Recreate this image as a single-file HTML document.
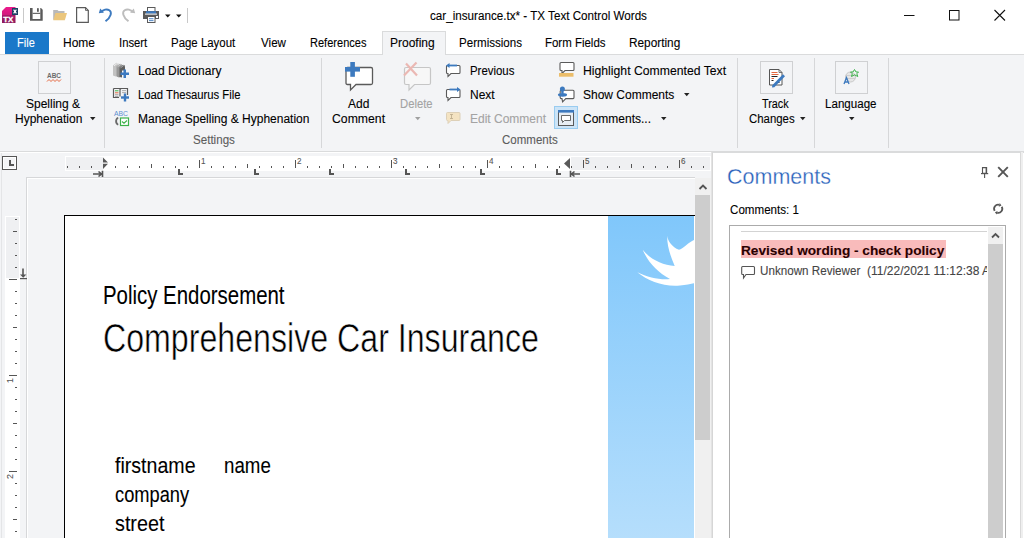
<!DOCTYPE html>
<html><head><meta charset="utf-8">
<style>
*{box-sizing:border-box;margin:0;padding:0}
html,body{width:1024px;height:538px;overflow:hidden;background:#fff;font-family:"Liberation Sans",sans-serif;font-size:12px;color:#000;position:relative}
.a{position:absolute}
.t{position:absolute;white-space:pre;line-height:1;transform-origin:0 0;-webkit-text-stroke:0.1px currentColor}
.sep{position:absolute;background:#d6d7d9;width:1px}
svg{position:absolute;overflow:visible}
.dt{color:#000}
.dtb{-webkit-text-stroke:0.55px #fff}
</style></head><body>

<!-- ===== Title bar ===== -->
<div id="titlebar" class="a" style="left:0;top:0;width:1024px;height:31px;background:#fff"></div>
<div class="t" style="left:430px;top:10px;font-size:12px;color:#000;transform:scaleX(0.971)">car_insurance.tx* - TX Text Control Words</div>


<!-- app icon -->
<svg style="left:0;top:0" width="200" height="31" viewBox="0 0 200 31">
 <defs><linearGradient id="mg" x1="0" y1="0" x2="0" y2="1"><stop offset="0" stop-color="#ec1a8c"/><stop offset="0.5" stop-color="#d1187d"/><stop offset="0.52" stop-color="#a8196a"/><stop offset="1" stop-color="#8e1b5c"/></linearGradient></defs>
 <path d="M6 7 H15.5 V23 H2 V11 Z" fill="url(#mg)"/>
 <rect x="12" y="8" width="6" height="7" fill="#1d3f63"/>
 <path d="M13.6 9.6 L16.4 13.4 M16.4 9.6 L13.6 13.4" stroke="#fff" stroke-width="1.1"/>
 <rect x="14.2" y="10.6" width="1.6" height="1.8" fill="#fff"/>
 <text x="3.2" y="21.8" font-family="Liberation Sans" font-weight="bold" font-size="8" fill="#fff" stroke="#fff" stroke-width="0.3" textLength="10" lengthAdjust="spacingAndGlyphs">TX</text>
 <rect x="23" y="8" width="1" height="15" fill="#c9c9c9"/>
 <!-- save -->
 <path d="M30 8 H32.6 V19 H40.3 V8 H41 L42.7 9.8 V20.7 H30 Z" fill="#5a5a5a"/>
 <rect x="32.6" y="12.8" width="7.7" height="1.1" fill="#5a5a5a"/>
 <rect x="37" y="8.2" width="1.8" height="3.6" fill="#5a5a5a"/>
 <!-- open -->
 <path d="M53.2 10 H57.5 L58.5 11 H64.5 V19.8 H53.2 Z" fill="#b9b9b9"/>
 <path d="M55.5 13 H67 L64.8 20.3 H53.3 Z" fill="#ebc67c"/>
 <!-- new -->
 <path d="M76.6 7.6 H85.5 L88.3 10.4 V22.3 H76.6 Z" fill="#fff" stroke="#5a5a5a" stroke-width="1.2"/>
 <path d="M85.5 7.6 V10.4 H88.3" fill="none" stroke="#5a5a5a" stroke-width="0.9"/>
 <!-- undo -->
 <path d="M101.5 12.3 C103 9.5 107 8.8 109.3 10.3 C112 12 111.5 16.5 105.5 21.3" fill="none" stroke="#3d7abf" stroke-width="1.9"/>
 <path d="M98.8 13.3 L100.2 8.6 L104 12.6 Z" fill="#3d7abf"/>
 <!-- redo -->
 <path d="M132.5 12.3 C131 9.5 127 8.8 124.7 10.3 C122 12 122.5 16.5 128.5 21.3" fill="none" stroke="#bdbdbd" stroke-width="1.9"/>
 <path d="M135.2 13.3 L133.8 8.6 L130 12.6 Z" fill="#bdbdbd"/>
 <!-- print -->
 <rect x="147.5" y="7.5" width="7.5" height="4.5" fill="#fff" stroke="#5a5a5a" stroke-width="1"/>
 <rect x="143" y="11" width="16" height="8" fill="#5a5a5a"/>
 <rect x="146" y="11.2" width="10" height="2.4" fill="#3d7abf"/>
 <rect x="145" y="13.6" width="12" height="1" fill="#fff"/>
 <rect x="156" y="16" width="2" height="2" fill="#fff"/>
 <rect x="147.5" y="16.5" width="7.5" height="6" fill="#fff" stroke="#5a5a5a" stroke-width="1"/>
 <rect x="149" y="18.3" width="4.5" height="0.9" fill="#3d7abf"/>
 <rect x="149" y="20.2" width="4.5" height="0.9" fill="#3d7abf"/>
 <!-- dropdowns -->
 <path d="M165 14.5 H170.5 L167.75 17.5 Z M176 14.5 H181.5 L178.75 17.5 Z" fill="#111"/>
 <rect x="187" y="8" width="1" height="15" fill="#c9c9c9"/>
</svg>
<!-- window controls -->
<svg style="left:890px;top:0" width="134" height="31" viewBox="890 0 134 31">
 <rect x="904" y="15" width="10.5" height="1" fill="#111"/>
 <rect x="949.5" y="10.5" width="9.5" height="9.5" fill="none" stroke="#111" stroke-width="1"/>
 <path d="M994.5 10 L1005 20.5 M1005 10 L994.5 20.5" stroke="#111" stroke-width="1.1"/>
</svg>

<!-- ===== Tabs ===== -->
<div class="a" style="left:5px;top:32px;width:44px;height:22px;background:#1a78c9"></div>
<div class="t" style="left:17px;top:37px;color:#fff;transform:scaleX(0.92)">File</div>
<div class="t" style="left:63px;top:37px">Home</div>
<div class="t" style="left:119px;top:37px;transform:scaleX(0.94)">Insert</div>
<div class="t" style="left:171px;top:37px;transform:scaleX(0.953)">Page Layout</div>
<div class="t" style="left:261px;top:37px;transform:scaleX(0.97)">View</div>
<div class="t" style="left:310px;top:37px;transform:scaleX(0.92)">References</div>
<div class="a" style="left:382px;top:31px;width:64px;height:24px;background:#f3f4f6;border:1px solid #dadbdc;border-bottom:none"></div>
<div class="t" style="left:390px;top:37px">Proofing</div>
<div class="t" style="left:459px;top:37px;transform:scaleX(0.964)">Permissions</div>
<div class="t" style="left:545px;top:37px;transform:scaleX(0.955)">Form Fields</div>
<div class="t" style="left:629px;top:37px;transform:scaleX(0.985)">Reporting</div>

<!-- ===== Ribbon ===== -->
<div class="a" style="left:0;top:54px;width:382px;height:1px;background:#dadbdc"></div>
<div class="a" style="left:446px;top:54px;width:578px;height:1px;background:#dadbdc"></div>
<div class="a" style="left:0;top:55px;width:1024px;height:96px;background:#f3f4f6"></div>
<div class="a" style="left:0;top:151px;width:1024px;height:1px;background:#dadbdc"></div>


<!-- separators -->
<div class="sep" style="left:104px;top:58px;height:90px"></div>
<div class="sep" style="left:321px;top:58px;height:90px"></div>
<div class="sep" style="left:737px;top:58px;height:90px"></div>
<div class="sep" style="left:814px;top:58px;height:90px"></div>
<div class="sep" style="left:888px;top:58px;height:90px"></div>

<!-- Spelling & Hyphenation -->
<div class="a" style="left:38px;top:61px;width:33px;height:33px;border:1px solid #cfd0d2"></div>
<svg style="left:38px;top:61px" width="33" height="33" viewBox="0 0 33 33">
 <text x="9" y="16.5" font-family="Liberation Sans" font-weight="bold" font-size="7" fill="#6b6b6b" textLength="14" lengthAdjust="spacingAndGlyphs">ABC</text>
 <polyline points="9,20.5 11,18.5 13,20.5 15,18.5 17,20.5 19,18.5 21,20.5 23,18.5" fill="none" stroke="#e5673f" stroke-width="1"/>
</svg>
<div class="t" style="left:26px;top:98px">Spelling &amp;</div>
<div class="t" style="left:15px;top:113px">Hyphenation</div>
<svg style="left:90px;top:117px" width="6" height="4" viewBox="0 0 6 4"><path d="M0 0 H5.5 L2.75 3.3 Z" fill="#222"/></svg>

<!-- Settings list -->
<svg style="left:113px;top:62px" width="16" height="16" viewBox="0 0 16 16">
 <path d="M0 3.5 L3.5 0.8 L5.5 1.5 V13.5 L2.5 14.5 L0 13.5 Z" fill="#c2c2c2"/>
 <path d="M1 3.8 L4 1.6 L5 2" fill="none" stroke="#fff" stroke-width="0.7"/>
 <path d="M3.5 4.5 L7 1.8 L9 2.5 V14.5 L6 15.5 L3.5 14.5 Z" fill="#999"/>
 <path d="M4.5 4.8 L7.5 2.6 L8.5 3" fill="none" stroke="#ddd" stroke-width="0.7"/>
 <path d="M6.5 5.5 L10 2.8 L12 3.5 V8.5 H9 V15.5 L6.5 15 Z" fill="#5e5e5e"/>
 <path d="M7.5 5.8 L10.5 3.6 L11.5 4" fill="none" stroke="#ccc" stroke-width="0.7"/>
 <rect x="7.5" y="10.5" width="8.5" height="2.5" fill="#3c79bf"/>
 <rect x="10.5" y="7.5" width="2.5" height="8.5" fill="#3c79bf"/>
</svg>
<div class="t" style="left:138px;top:65px">Load Dictionary</div>
<svg style="left:113px;top:86px" width="16" height="16" viewBox="0 0 16 16">
 <path d="M0.5 2.5 H7 V10.5 M7.5 3.5 V2.5 H14.5 V9" fill="none" stroke="#5a5a5a" stroke-width="1.2"/>
 <path d="M0.5 2.5 V11.5 H6" fill="none" stroke="#5a5a5a" stroke-width="1.2"/>
 <rect x="2" y="4.3" width="3.5" height="1" fill="#3cb24a"/>
 <rect x="2" y="6.3" width="3.5" height="1" fill="#e5673f"/>
 <rect x="2" y="8.3" width="3.5" height="1" fill="#9a9a9a"/>
 <rect x="2" y="10" width="3.5" height="0.8" fill="#9a9a9a"/>
 <rect x="9" y="4.3" width="4" height="0.8" fill="#9a9a9a"/>
 <rect x="9" y="6.3" width="4" height="0.8" fill="#9a9a9a"/>
 <rect x="8" y="10.3" width="8" height="2.4" fill="#3c79bf"/>
 <rect x="10.8" y="7.5" width="2.4" height="8" fill="#3c79bf"/>
</svg>
<div class="t" style="left:138px;top:89px;transform:scaleX(0.939)">Load Thesaurus File</div>
<svg style="left:113px;top:110px" width="16" height="16" viewBox="0 0 16 16">
 <text x="1" y="6" font-family="Liberation Sans" font-size="6.5" fill="#5b8fd0" textLength="14" lengthAdjust="spacingAndGlyphs">ABC</text>
 <path d="M5 7 C1.5 8 1 14 5 15.5 L5.5 14 C3.5 12.5 3.5 9.5 5.5 8.5 Z" fill="#6a6a6a"/>
 <rect x="7.5" y="8" width="8" height="7.5" fill="#fff" stroke="#3cb24a" stroke-width="1.2"/>
 <path d="M9 11.5 L11 13.2 L14 10.5" fill="none" stroke="#3cb24a" stroke-width="1.1"/>
</svg>
<div class="t" style="left:138px;top:113px">Manage Spelling &amp; Hyphenation</div>
<div class="t" style="left:193px;top:134px;color:#5c5c5c;transform:scaleX(0.966)">Settings</div>

<!-- Add Comment -->
<svg style="left:340px;top:58px" width="40" height="36" viewBox="0 0 40 36">
 <path d="M7.5 9.5 H31 Q32.5 9.5 32.5 11 V25 Q32.5 26.5 31 26.5 H16 L10.5 32 V26.5 H7.5 Q6 26.5 6 25 V11 Q6 9.5 7.5 9.5 Z" fill="#fff" stroke="#5a5a5a" stroke-width="1.3"/>
 <rect x="10.3" y="4" width="4.6" height="14.8" fill="#3d7abf"/>
 <rect x="5" y="9" width="15" height="4.6" fill="#3d7abf"/>
</svg>
<div class="t" style="left:348px;top:98px">Add</div>
<div class="t" style="left:332px;top:113px;transform:scaleX(1.02)">Comment</div>

<!-- Delete -->
<svg style="left:398px;top:58px" width="40" height="36" viewBox="0 0 40 36">
 <path d="M8 9.5 H31 Q32.5 9.5 32.5 11 V25 Q32.5 26.5 31 26.5 H16.5 L11 32 V26.5 H8 Q6.5 26.5 6.5 25 V11 Q6.5 9.5 8 9.5 Z" fill="#f7f7f7" stroke="#c6c6c6" stroke-width="1.2"/>
 <path d="M6 17.5 L18.5 4.5 M8 5.5 L19 17.5" stroke="#ebb8b3" stroke-width="2.2"/>
</svg>
<div class="t" style="left:400px;top:98px;color:#a3a3a3;transform:scaleX(0.94)">Delete</div>
<svg style="left:415px;top:117px" width="6" height="4" viewBox="0 0 6 4"><path d="M0 0 H5.5 L2.75 3.3 Z" fill="#a0a0a0"/></svg>

<!-- Previous / Next / Edit Comment -->
<svg style="left:445px;top:62px" width="16" height="16" viewBox="0 0 16 16">
 <path d="M2.5 3.5 H14 Q15 3.5 15 4.5 V10.5 Q15 11.5 14 11.5 H6 L3 14.5 V11.5 H2.5 Q1.5 11.5 1.5 10.5 V4.5 Q1.5 3.5 2.5 3.5 Z" fill="#fff" stroke="#5a5a5a" stroke-width="1.1"/>
 <path d="M1 3.5 L4.5 1 V6 Z" fill="#3d7abf"/><rect x="3" y="2.6" width="9" height="1.8" fill="#3d7abf"/>
</svg>
<div class="t" style="left:470px;top:65px;transform:scaleX(0.95)">Previous</div>
<svg style="left:445px;top:86px" width="16" height="16" viewBox="0 0 16 16">
 <path d="M2.5 3.5 H14 Q15 3.5 15 4.5 V10.5 Q15 11.5 14 11.5 H6 L3 14.5 V11.5 H2.5 Q1.5 11.5 1.5 10.5 V4.5 Q1.5 3.5 2.5 3.5 Z" fill="#fff" stroke="#5a5a5a" stroke-width="1.1"/>
 <path d="M15.5 3.5 L12 1 V6 Z" fill="#3d7abf"/><rect x="4.5" y="2.6" width="9" height="1.8" fill="#3d7abf"/>
</svg>
<div class="t" style="left:470px;top:89px">Next</div>
<svg style="left:445px;top:110px" width="16" height="16" viewBox="0 0 16 16">
 <path d="M2.5 2.5 H14 Q15 2.5 15 3.5 V9.5 Q15 10.5 14 10.5 H6 L3 13.5 V10.5 H2.5 Q1.5 10.5 1.5 9.5 V3.5 Q1.5 2.5 2.5 2.5 Z" fill="#f4e3c2" stroke="#ddd0b8" stroke-width="1"/>
 <path d="M5 4.5 H8 M6.5 4.5 V8.5 M5 8.5 H8" stroke="#b9a98a" stroke-width="0.8"/>
</svg>
<div class="t" style="left:470px;top:113px;color:#a3a3a3">Edit Comment</div>
<div class="t" style="left:502px;top:134px;color:#5c5c5c;transform:scaleX(0.96)">Comments</div>

<!-- Highlight / Show / Comments... -->
<svg style="left:557px;top:60px" width="18" height="18" viewBox="0 0 18 18">
 <path d="M4 2.5 H16 Q17 2.5 17 3.5 V9.5 Q17 10.5 16 10.5 H8 L5 13.5 V10.5 H4 Q3 10.5 3 9.5 V3.5 Q3 2.5 4 2.5 Z" fill="#fff" stroke="#5a5a5a" stroke-width="1.1"/>
 <rect x="2" y="13" width="14.5" height="3.7" fill="#ebbd6a"/>
</svg>
<div class="t" style="left:583px;top:65px;transform:scaleX(1.018)">Highlight Commented Text</div>
<svg style="left:557px;top:85px" width="18" height="18" viewBox="0 0 18 18">
 <path d="M4.2 5.3 H16 Q17 5.3 17 6.3 V12.6 Q17 13.6 16 13.6 H8.8 L5.6 16.9 L5 13.6 H4.2 Q3.2 13.6 3.2 12.6 V6.3 Q3.2 5.3 4.2 5.3 Z" fill="#fff" stroke="#5a5a5a" stroke-width="1.1"/>
 <circle cx="5.4" cy="4.1" r="2.5" fill="#3d7abf"/>
 <rect x="4.2" y="5.5" width="2.4" height="3" fill="#3d7abf"/>
 <ellipse cx="5.5" cy="9.8" rx="4.6" ry="1.9" fill="#3d7abf"/>
</svg>
<div class="t" style="left:583px;top:89px">Show Comments</div>
<svg style="left:684px;top:93px" width="6" height="4" viewBox="0 0 6 4"><path d="M0 0 H5.5 L2.75 3.3 Z" fill="#222"/></svg>
<div class="a" style="left:554px;top:106px;width:24px;height:23px;background:#cce4f7;border:1px solid #99ccf0"></div>
<svg style="left:554px;top:106px" width="24" height="23" viewBox="0 0 24 23">
 <rect x="4.5" y="4.5" width="15" height="15" fill="#e8eef4" stroke="#5a5a5a" stroke-width="1"/>
 <rect x="4" y="4" width="16" height="2.6" fill="#3d7abf"/>
 <path d="M7.5 9.5 H16.5 V14.5 H10.5 L8.5 16.5 V14.5 H7.5 Z" fill="#fff" stroke="#5a5a5a" stroke-width="0.9"/>
</svg>
<div class="t" style="left:583px;top:113px">Comments...</div>
<svg style="left:661px;top:117px" width="6" height="4" viewBox="0 0 6 4"><path d="M0 0 H5.5 L2.75 3.3 Z" fill="#222"/></svg>

<!-- Track Changes -->
<div class="a" style="left:760px;top:61px;width:33px;height:33px;border:1px solid #cfd0d2"></div>
<svg style="left:760px;top:61px" width="33" height="33" viewBox="0 0 33 33">
 <path d="M9.5 8.5 H19 L22 11.5 V24 H9.5 Z" fill="#fff" stroke="#555" stroke-width="1"/>
 <path d="M19 8.5 V11.5 H22" fill="none" stroke="#555" stroke-width="0.8"/>
 <rect x="11.5" y="11" width="6" height="1" fill="#e5673f"/>
 <rect x="11.5" y="13" width="7" height="1" fill="#e5673f"/>
 <rect x="11.5" y="15" width="6" height="1" fill="#222"/>
 <rect x="11.5" y="17" width="2.5" height="1" fill="#e5673f"/>
 <rect x="11.5" y="19" width="2" height="1" fill="#222"/>
 <rect x="17" y="21" width="2.5" height="1" fill="#222"/>
 <path d="M12.3 24.3 L23 13.2 L25 15.2 L14.3 26.2 L12 26.6 Z" fill="#3d7abf"/>
</svg>
<div class="t" style="left:762px;top:98px;transform:scaleX(0.9)">Track</div>
<div class="t" style="left:749px;top:113px;transform:scaleX(0.95)">Changes</div>
<svg style="left:800px;top:117px" width="6" height="4" viewBox="0 0 6 4"><path d="M0 0 H5.5 L2.75 3.3 Z" fill="#222"/></svg>

<!-- Language -->
<div class="a" style="left:835px;top:61px;width:33px;height:33px;border:1px solid #cfd0d2"></div>
<svg style="left:835px;top:61px" width="33" height="33" viewBox="0 0 33 33">
 <circle cx="15.5" cy="16" r="5" fill="#e6e6e6" stroke="#c9c9c9" stroke-width="1"/>
 <path d="M11 14.5 H20 M11 17.5 H20" stroke="#c9c9c9" stroke-width="0.8"/>
 <path d="M9 23 L11.5 16.5 L14 23 M10 21 H13" fill="none" stroke="#3d7abf" stroke-width="1.3"/>
 <path d="M19.5 8.5 L21 11 L23.5 11 L21.8 12.8 L22.8 15.5 L19.5 13.8 L16.5 15.5 L17.3 12.8 L15.5 11 L18 11 Z" fill="none" stroke="#3cb24a" stroke-width="1"/>
</svg>
<div class="t" style="left:825px;top:98px;transform:scaleX(0.965)">Language</div>
<svg style="left:849px;top:117px" width="6" height="4" viewBox="0 0 6 4"><path d="M0 0 H5.5 L2.75 3.3 Z" fill="#222"/></svg>


<!-- ===== Document area ===== -->
<div class="a" style="left:0;top:152px;width:712px;height:386px;background:#f3f4f6"></div>
<div class="a" style="left:1px;top:152px;width:1px;height:386px;background:#e4e5e7"></div>
<!-- tab selector -->
<div class="a" style="left:2px;top:156px;width:15px;height:14px;border:1px solid #555;background:#f3f4f6;box-shadow:inset 0 0 0 1px #fff"></div>
<div class="a" style="left:9px;top:160px;width:5px;height:6px;border-left:2px solid #555;border-bottom:2px solid #555"></div>
<!-- ruler -->
<div class="a" style="left:0;top:152px;width:712px;height:1px;background:#fff"></div>
<div class="a" style="left:65px;top:156px;width:646px;height:15px;background:#fff"></div>
<div class="a" style="left:66px;top:157px;width:37px;height:13px;background:#eff0f2"></div>
<div class="a" style="left:571px;top:157px;width:139px;height:13px;background:#eff0f2"></div>
<div class="a" style="left:67px;top:166px;width:1px;height:2px;background:#555"></div>
<div class="a" style="left:79px;top:166px;width:1px;height:2px;background:#555"></div>
<div class="a" style="left:91px;top:166px;width:1px;height:2px;background:#555"></div>
<div class="a" style="left:115px;top:166px;width:1px;height:2px;background:#555"></div>
<div class="a" style="left:127px;top:166px;width:1px;height:2px;background:#555"></div>
<div class="a" style="left:139px;top:166px;width:1px;height:2px;background:#555"></div>
<div class="a" style="left:151px;top:164px;width:1px;height:4px;background:#555"></div>
<div class="a" style="left:163px;top:166px;width:1px;height:2px;background:#555"></div>
<div class="a" style="left:175px;top:166px;width:1px;height:2px;background:#555"></div>
<div class="a" style="left:187px;top:166px;width:1px;height:2px;background:#555"></div>
<div class="a" style="left:199px;top:160px;width:1px;height:8px;background:#555"></div>
<div class="t" style="left:201px;top:157px;font-size:9px;color:#555;transform:scaleX(0.9)">1</div>
<div class="a" style="left:211px;top:166px;width:1px;height:2px;background:#555"></div>
<div class="a" style="left:223px;top:166px;width:1px;height:2px;background:#555"></div>
<div class="a" style="left:235px;top:166px;width:1px;height:2px;background:#555"></div>
<div class="a" style="left:247px;top:164px;width:1px;height:4px;background:#555"></div>
<div class="a" style="left:259px;top:166px;width:1px;height:2px;background:#555"></div>
<div class="a" style="left:271px;top:166px;width:1px;height:2px;background:#555"></div>
<div class="a" style="left:283px;top:166px;width:1px;height:2px;background:#555"></div>
<div class="a" style="left:295px;top:160px;width:1px;height:8px;background:#555"></div>
<div class="t" style="left:297px;top:157px;font-size:9px;color:#555;transform:scaleX(0.9)">2</div>
<div class="a" style="left:307px;top:166px;width:1px;height:2px;background:#555"></div>
<div class="a" style="left:319px;top:166px;width:1px;height:2px;background:#555"></div>
<div class="a" style="left:331px;top:166px;width:1px;height:2px;background:#555"></div>
<div class="a" style="left:343px;top:164px;width:1px;height:4px;background:#555"></div>
<div class="a" style="left:355px;top:166px;width:1px;height:2px;background:#555"></div>
<div class="a" style="left:367px;top:166px;width:1px;height:2px;background:#555"></div>
<div class="a" style="left:379px;top:166px;width:1px;height:2px;background:#555"></div>
<div class="a" style="left:391px;top:160px;width:1px;height:8px;background:#555"></div>
<div class="t" style="left:393px;top:157px;font-size:9px;color:#555;transform:scaleX(0.9)">3</div>
<div class="a" style="left:403px;top:166px;width:1px;height:2px;background:#555"></div>
<div class="a" style="left:415px;top:166px;width:1px;height:2px;background:#555"></div>
<div class="a" style="left:427px;top:166px;width:1px;height:2px;background:#555"></div>
<div class="a" style="left:439px;top:164px;width:1px;height:4px;background:#555"></div>
<div class="a" style="left:451px;top:166px;width:1px;height:2px;background:#555"></div>
<div class="a" style="left:463px;top:166px;width:1px;height:2px;background:#555"></div>
<div class="a" style="left:475px;top:166px;width:1px;height:2px;background:#555"></div>
<div class="a" style="left:487px;top:160px;width:1px;height:8px;background:#555"></div>
<div class="t" style="left:489px;top:157px;font-size:9px;color:#555;transform:scaleX(0.9)">4</div>
<div class="a" style="left:499px;top:166px;width:1px;height:2px;background:#555"></div>
<div class="a" style="left:511px;top:166px;width:1px;height:2px;background:#555"></div>
<div class="a" style="left:523px;top:166px;width:1px;height:2px;background:#555"></div>
<div class="a" style="left:535px;top:164px;width:1px;height:4px;background:#555"></div>
<div class="a" style="left:547px;top:166px;width:1px;height:2px;background:#555"></div>
<div class="a" style="left:559px;top:166px;width:1px;height:2px;background:#555"></div>
<div class="a" style="left:571px;top:166px;width:1px;height:2px;background:#555"></div>
<div class="a" style="left:583px;top:160px;width:1px;height:8px;background:#555"></div>
<div class="t" style="left:585px;top:157px;font-size:9px;color:#555;transform:scaleX(0.9)">5</div>
<div class="a" style="left:595px;top:166px;width:1px;height:2px;background:#555"></div>
<div class="a" style="left:607px;top:166px;width:1px;height:2px;background:#555"></div>
<div class="a" style="left:619px;top:166px;width:1px;height:2px;background:#555"></div>
<div class="a" style="left:631px;top:164px;width:1px;height:4px;background:#555"></div>
<div class="a" style="left:643px;top:166px;width:1px;height:2px;background:#555"></div>
<div class="a" style="left:655px;top:166px;width:1px;height:2px;background:#555"></div>
<div class="a" style="left:667px;top:166px;width:1px;height:2px;background:#555"></div>
<div class="a" style="left:679px;top:160px;width:1px;height:8px;background:#555"></div>
<div class="t" style="left:681px;top:157px;font-size:9px;color:#555;transform:scaleX(0.9)">6</div>
<div class="a" style="left:691px;top:166px;width:1px;height:2px;background:#555"></div>
<div class="a" style="left:703px;top:166px;width:1px;height:2px;background:#555"></div>
<div class="a" style="left:178px;top:169px;width:5px;height:6px;border-left:2px solid #555;border-bottom:2px solid #555"></div>
<div class="a" style="left:254px;top:169px;width:5px;height:6px;border-left:2px solid #555;border-bottom:2px solid #555"></div>
<div class="a" style="left:329px;top:169px;width:5px;height:6px;border-left:2px solid #555;border-bottom:2px solid #555"></div>
<div class="a" style="left:405px;top:169px;width:5px;height:6px;border-left:2px solid #555;border-bottom:2px solid #555"></div>
<div class="a" style="left:480px;top:169px;width:5px;height:6px;border-left:2px solid #555;border-bottom:2px solid #555"></div>
<div class="a" style="left:556px;top:169px;width:5px;height:6px;border-left:2px solid #555;border-bottom:2px solid #555"></div>
<svg style="left:102px;top:157px" width="8" height="14" viewBox="0 0 8 14">
 <path d="M1 0.5 L6 5.5 L1 5.5 Z M1 6.8 L6 6.8 L1 12 Z" fill="#5a5a5a"/>
</svg>
<svg style="left:92px;top:170px" width="12" height="8" viewBox="0 0 12 8">
 <path d="M1 4 H9 M6.5 1.5 L9.5 4 L6.5 6.5 M10.5 0.8 V7.2" fill="none" stroke="#555" stroke-width="1.6"/>
</svg>
<svg style="left:563px;top:157px" width="8" height="14" viewBox="0 0 8 14">
 <path d="M7 1 L7 12 L1 6.5 Z" fill="#5a5a5a"/>
</svg>
<svg style="left:569px;top:170px" width="12" height="8" viewBox="0 0 12 8">
 <path d="M11 4 H3 M5.5 1.5 L2.5 4 L5.5 6.5 M1.5 0.8 V7.2" fill="none" stroke="#555" stroke-width="1.6"/>
</svg>
<!-- frame -->
<div class="a" style="left:26px;top:177px;width:669px;height:1px;background:#d6d7d9"></div>
<div class="a" style="left:27px;top:178px;width:668px;height:1px;background:#fff"></div>
<div class="a" style="left:26px;top:177px;width:1px;height:361px;background:#d6d7d9"></div>
<div class="a" style="left:27px;top:178px;width:1px;height:360px;background:#fff"></div>
<!-- vertical ruler -->
<div class="a" style="left:5px;top:216px;width:15px;height:322px;background:#fff"></div>
<div class="a" style="left:6px;top:217px;width:13px;height:61px;background:#eff0f2"></div>
<div class="a" style="left:15px;top:219px;width:2px;height:1px;background:#555"></div>
<div class="a" style="left:13px;top:231px;width:4px;height:1px;background:#555"></div>
<div class="a" style="left:15px;top:243px;width:2px;height:1px;background:#555"></div>
<div class="a" style="left:15px;top:255px;width:2px;height:1px;background:#555"></div>
<div class="a" style="left:15px;top:267px;width:2px;height:1px;background:#555"></div>
<div class="a" style="left:9px;top:279px;width:8px;height:1px;background:#555"></div>
<div class="a" style="left:15px;top:291px;width:2px;height:1px;background:#555"></div>
<div class="a" style="left:15px;top:303px;width:2px;height:1px;background:#555"></div>
<div class="a" style="left:15px;top:315px;width:2px;height:1px;background:#555"></div>
<div class="a" style="left:13px;top:327px;width:4px;height:1px;background:#555"></div>
<div class="a" style="left:15px;top:339px;width:2px;height:1px;background:#555"></div>
<div class="a" style="left:15px;top:351px;width:2px;height:1px;background:#555"></div>
<div class="a" style="left:15px;top:363px;width:2px;height:1px;background:#555"></div>
<div class="a" style="left:9px;top:375px;width:8px;height:1px;background:#555"></div>
<div class="a" style="left:15px;top:387px;width:2px;height:1px;background:#555"></div>
<div class="a" style="left:15px;top:399px;width:2px;height:1px;background:#555"></div>
<div class="a" style="left:15px;top:411px;width:2px;height:1px;background:#555"></div>
<div class="a" style="left:13px;top:423px;width:4px;height:1px;background:#555"></div>
<div class="a" style="left:15px;top:435px;width:2px;height:1px;background:#555"></div>
<div class="a" style="left:15px;top:447px;width:2px;height:1px;background:#555"></div>
<div class="a" style="left:15px;top:459px;width:2px;height:1px;background:#555"></div>
<div class="a" style="left:9px;top:471px;width:8px;height:1px;background:#555"></div>
<div class="a" style="left:15px;top:483px;width:2px;height:1px;background:#555"></div>
<div class="a" style="left:15px;top:495px;width:2px;height:1px;background:#555"></div>
<div class="a" style="left:15px;top:507px;width:2px;height:1px;background:#555"></div>
<div class="a" style="left:13px;top:519px;width:4px;height:1px;background:#555"></div>
<div class="a" style="left:15px;top:531px;width:2px;height:1px;background:#555"></div>
<svg style="left:19px;top:267px" width="9" height="13" viewBox="0 0 9 13">
 <path d="M4 1.5 V9" stroke="#555" stroke-width="1.6"/>
 <path d="M1 7.5 H7.4 L4.2 10.8 Z" fill="#555"/>
 <rect x="1" y="11" width="7" height="1.2" fill="#555"/>
</svg>
<div class="t" style="left:6px;top:383px;font-size:9px;color:#555;transform:rotate(-90deg)">1</div>
<div class="t" style="left:6px;top:479px;font-size:9px;color:#555;transform:rotate(-90deg)">2</div>
<!-- page -->
<div class="a" style="left:64px;top:215px;width:640px;height:400px;background:#fff;border-left:1.5px solid #000;border-top:1.5px solid #000"></div>
<div class="a" style="left:608px;top:216px;width:86px;height:322px;background:linear-gradient(#80c7fb,#b5defc)"></div>
<svg style="left:608px;top:216px" width="86" height="322" viewBox="608 216 86 322">
 <path d="M667.2 235.9 C667 246 670 255 674.7 266 C662 265 650 259 642.7 249.8 C648 262 657 272 670 279 C660 280 648 277.5 637.3 272.2 C648 281 664 287 680 285.5 C686 285 690 284 695 283 L695 239.5 C688 242.5 683 249 679 249.8 C672 247 668 241 667.2 235.9 Z" fill="#fff"/>
</svg>
<div class="t dt" style="left:103px;top:282px;font-size:26px;transform:scaleX(0.785)">Policy Endorsement</div>
<div class="t dt dtb" style="left:103px;top:318px;font-size:41px;transform:scaleX(0.784)">Comprehensive Car Insurance</div>
<div class="t dt" style="left:115px;top:455px;font-size:22px;transform:scaleX(0.89)">firstname</div>
<div class="t dt" style="left:224px;top:455px;font-size:22px;transform:scaleX(0.85)">name</div>
<div class="t dt" style="left:115px;top:484px;font-size:22px;transform:scaleX(0.83)">company</div>
<div class="t dt" style="left:115px;top:513px;font-size:22px;transform:scaleX(0.898)">street</div>
<!-- scrollbar -->
<div class="a" style="left:695px;top:178px;width:16px;height:360px;background:#f0f0f0"></div>
<svg style="left:695px;top:178px" width="16" height="17" viewBox="0 0 16 17">
 <path d="M4.5 11 L8 7.5 L11.5 11" fill="none" stroke="#555" stroke-width="1.8"/>
</svg>
<div class="a" style="left:695px;top:195px;width:15px;height:245px;background:#cdcdcd"></div>
<div class="a" style="left:711px;top:152px;width:1px;height:386px;background:#e3e3e3"></div>

<!-- ===== Comments panel ===== -->
<div class="a" style="left:712px;top:152px;width:312px;height:386px;background:#fff;border-left:1px solid #d6d6d6;border-top:1px solid #dadbdc"></div>
<div class="a" style="left:1020px;top:152px;width:1px;height:386px;background:#d9d9d9"></div>
<div class="a" style="left:1021px;top:152px;width:2px;height:386px;background:#efefef"></div>
<div class="t" style="left:727px;top:167px;font-size:21.5px;color:#2a62bb;-webkit-text-stroke:0.3px #fff;transform:scaleX(1.0)">Comments</div>
<svg style="left:978px;top:164px" width="14" height="16" viewBox="0 0 14 16">
 <path d="M4.5 3.6 H8.6 V9.3 H4.5 Z" fill="none" stroke="#555" stroke-width="1.1"/>
 <rect x="7.6" y="3.2" width="1.4" height="6" fill="#555"/>
 <path d="M3 9.6 H10.2" stroke="#555" stroke-width="1.2"/>
 <path d="M6.6 9.6 V14" stroke="#555" stroke-width="1.1"/>
</svg>
<svg style="left:996px;top:165px" width="14" height="14" viewBox="0 0 14 14">
 <path d="M2.2 2.2 L11.8 11.8 M11.8 2.2 L2.2 11.8" stroke="#555" stroke-width="1.9"/>
</svg>
<div class="t" style="left:730px;top:204px;transform:scaleX(0.967)">Comments: 1</div>
<svg style="left:991px;top:202px" width="14" height="14" viewBox="0 0 14 14">
 <path d="M3.65 8.85 A4.1 4.1 0 0 1 8.26 2.84" fill="none" stroke="#555" stroke-width="1.8"/>
 <path d="M10.75 4.75 A4.1 4.1 0 0 1 6.14 10.76" fill="none" stroke="#555" stroke-width="1.8"/>
 <path d="M10.48 3.43 L8.75 1.00 L7.77 4.67 Z M3.92 10.17 L5.65 12.60 L6.63 8.93 Z" fill="#555"/>
</svg>
<div class="a" style="left:729px;top:225px;width:277px;height:320px;border:1px solid #ababab;background:#fff"></div>
<div class="a" style="left:741px;top:231px;width:246px;height:1px;background:#d3d3d3"></div>
<div class="a" style="left:741px;top:240px;width:205px;height:18px;background:#f9bbbb"></div>
<div class="t" style="left:741px;top:244px;font-size:13px;font-weight:bold;color:#2a0000;transform:scaleX(1.05)">Revised wording - check policy</div>
<svg style="left:741px;top:265px" width="16" height="16" viewBox="0 0 16 16">
 <path d="M1.5 1.5 H12.5 Q13.5 1.5 13.5 2.5 V8.5 Q13.5 9.5 12.5 9.5 H5 L2.5 13 V9.5 H1.5 Q0.7 9.5 0.7 8.5 V2.5 Q0.7 1.5 1.5 1.5 Z" fill="#fff" stroke="#555" stroke-width="1.1"/>
</svg>
<div class="a" style="left:760px;top:262px;width:227px;height:18px;overflow:hidden">
 <div class="t" style="left:0;top:3px;color:#444;transform:scaleX(0.97)">Unknown Reviewer</div>
 <div class="t" style="left:107px;top:3px;color:#444">(11/22/2021 11:12:38 AM)</div>
</div>
<div class="a" style="left:988px;top:227px;width:15px;height:311px;background:#f0f0f0"></div>
<svg style="left:988px;top:227px" width="15" height="17" viewBox="0 0 15 17">
 <path d="M4 10.5 L7.5 7 L11 10.5" fill="none" stroke="#555" stroke-width="1.8"/>
</svg>
<div class="a" style="left:988px;top:244px;width:15px;height:294px;background:#cdcdcd"></div>

</body></html>
